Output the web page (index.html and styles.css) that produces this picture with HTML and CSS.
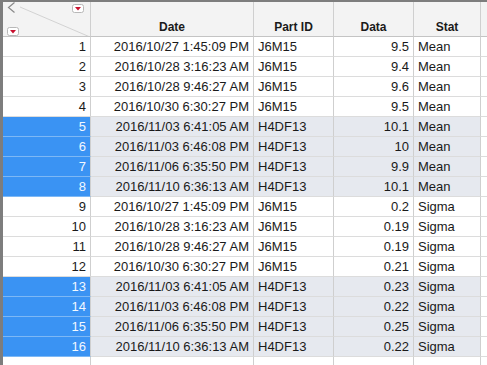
FILE: index.html
```html
<!DOCTYPE html>
<html>
<head>
    <title>Data Table</title>
    <link rel="stylesheet" href="styles.css">
</head>
<body>
    <div class="table-frame">
        <div class="grid header">
            <div class="cell corner">
                <svg class="corner-art" width="88" height="35" viewBox="0 0 88 35">
                    <line x1="17" y1="5" x2="87" y2="35" stroke="#d2d2d2" stroke-width="1"/>
                    <path d="M11.5 0.5 L5.5 5.5 L11.5 10.5" fill="none" stroke="#8a8a8a" stroke-width="1.2"/>
                    <rect x="69.5" y="2.5" width="11" height="8" rx="2" fill="#fff" stroke="#b8b8b8"/>
                    <path d="M72 5 L78 5 L75 8.5 Z" fill="#c8102e"/>
                    <rect x="4.5" y="25.5" width="11" height="8" rx="2" fill="#fff" stroke="#b8b8b8"/>
                    <path d="M7 28 L13 28 L10 31.5 Z" fill="#c8102e"/>
                </svg>
            </div>
            <div class="cell head">Date</div>
            <div class="cell head">Part ID</div>
            <div class="cell head">Data</div>
            <div class="cell head">Stat</div>
            <div class="cell head filler"></div>
        </div>

        <div class="grid row"><div class="cell num">1</div><div class="cell right">2016/10/27 1:45:09 PM</div><div class="cell">J6M15</div><div class="cell right">9.5</div><div class="cell">Mean</div><div class="cell filler"></div></div>
        <div class="grid row"><div class="cell num">2</div><div class="cell right">2016/10/28 3:16:23 AM</div><div class="cell">J6M15</div><div class="cell right">9.4</div><div class="cell">Mean</div><div class="cell filler"></div></div>
        <div class="grid row"><div class="cell num">3</div><div class="cell right">2016/10/28 9:46:27 AM</div><div class="cell">J6M15</div><div class="cell right">9.6</div><div class="cell">Mean</div><div class="cell filler"></div></div>
        <div class="grid row"><div class="cell num">4</div><div class="cell right">2016/10/30 6:30:27 PM</div><div class="cell">J6M15</div><div class="cell right">9.5</div><div class="cell">Mean</div><div class="cell filler"></div></div>
        <div class="grid row selected"><div class="cell num">5</div><div class="cell right">2016/11/03 6:41:05 AM</div><div class="cell">H4DF13</div><div class="cell right">10.1</div><div class="cell">Mean</div><div class="cell filler"></div></div>
        <div class="grid row selected"><div class="cell num">6</div><div class="cell right">2016/11/03 6:46:08 PM</div><div class="cell">H4DF13</div><div class="cell right">10</div><div class="cell">Mean</div><div class="cell filler"></div></div>
        <div class="grid row selected"><div class="cell num">7</div><div class="cell right">2016/11/06 6:35:50 PM</div><div class="cell">H4DF13</div><div class="cell right">9.9</div><div class="cell">Mean</div><div class="cell filler"></div></div>
        <div class="grid row selected"><div class="cell num">8</div><div class="cell right">2016/11/10 6:36:13 AM</div><div class="cell">H4DF13</div><div class="cell right">10.1</div><div class="cell">Mean</div><div class="cell filler"></div></div>
        <div class="grid row"><div class="cell num">9</div><div class="cell right">2016/10/27 1:45:09 PM</div><div class="cell">J6M15</div><div class="cell right">0.2</div><div class="cell">Sigma</div><div class="cell filler"></div></div>
        <div class="grid row"><div class="cell num">10</div><div class="cell right">2016/10/28 3:16:23 AM</div><div class="cell">J6M15</div><div class="cell right">0.19</div><div class="cell">Sigma</div><div class="cell filler"></div></div>
        <div class="grid row"><div class="cell num">11</div><div class="cell right">2016/10/28 9:46:27 AM</div><div class="cell">J6M15</div><div class="cell right">0.19</div><div class="cell">Sigma</div><div class="cell filler"></div></div>
        <div class="grid row"><div class="cell num">12</div><div class="cell right">2016/10/30 6:30:27 PM</div><div class="cell">J6M15</div><div class="cell right">0.21</div><div class="cell">Sigma</div><div class="cell filler"></div></div>
        <div class="grid row selected"><div class="cell num">13</div><div class="cell right">2016/11/03 6:41:05 AM</div><div class="cell">H4DF13</div><div class="cell right">0.23</div><div class="cell">Sigma</div><div class="cell filler"></div></div>
        <div class="grid row selected"><div class="cell num">14</div><div class="cell right">2016/11/03 6:46:08 PM</div><div class="cell">H4DF13</div><div class="cell right">0.22</div><div class="cell">Sigma</div><div class="cell filler"></div></div>
        <div class="grid row selected"><div class="cell num">15</div><div class="cell right">2016/11/06 6:35:50 PM</div><div class="cell">H4DF13</div><div class="cell right">0.25</div><div class="cell">Sigma</div><div class="cell filler"></div></div>
        <div class="grid row selected"><div class="cell num">16</div><div class="cell right">2016/11/10 6:36:13 AM</div><div class="cell">H4DF13</div><div class="cell right">0.22</div><div class="cell">Sigma</div><div class="cell filler"></div></div>
        <div class="grid row empty"><div class="cell num"></div><div class="cell"></div><div class="cell"></div><div class="cell"></div><div class="cell"></div><div class="cell filler"></div></div>
    </div>
</body>
</html>
```

FILE: styles.css
```css
:root {
    --frame: #7d7d7d;
    --grid-h: #dcdcdc;
    --grid-v: #cfcfcf;
    --select: #3a93f3;
    --select-row: #e6e9ef;
    --text: #1a1a1a;
}

* { box-sizing: border-box; margin: 0; padding: 0; }

body {
    font-family: "Liberation Sans", Arial, sans-serif;
    font-size: 13px;
    color: var(--text);
    background: #fff;
    height: 365px;
    overflow: hidden;
}

.table-frame {
    border-top: 2px solid var(--frame);
    border-left: 3px solid var(--frame);
    min-height: 365px;
}

.grid {
    display: grid;
    grid-template-columns: 88px 163px 80px 80px 67px 1fr;
}

.cell {
    border-right: 1px solid var(--grid-v);
    border-bottom: 1px solid var(--grid-h);
    height: 20px;
    line-height: 19px;
    padding: 0 4px;
    white-space: nowrap;
    overflow: hidden;
}

.cell.right { text-align: right; }
.cell.filler { border-right: none; }

.header .cell {
    height: 35px;
    background: #f3f3f3;
    border-bottom: 1px solid #c4c4c4;
}

.head {
    font-weight: bold;
    font-size: 12px;
    text-align: center;
    display: flex;
    align-items: flex-end;
    justify-content: center;
    padding-bottom: 2px;
    line-height: 14px;
}

.corner {
    padding: 0;
    position: relative;
}

.corner-art {
    display: block;
}

.num {
    text-align: right;
    padding-right: 4px;
    background: #fff;
}

.selected .cell {
    background: var(--select-row);
}

.selected .num {
    background: var(--select);
    color: #f2f8ff;
    border-bottom-color: #7db8f5;
}

.selected .filler {
    background: #fff;
}
```
